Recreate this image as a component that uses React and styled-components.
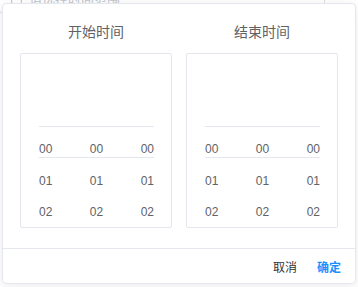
import React from "react";
import styled, { createGlobalStyle } from "styled-components";
import { LuCalendar } from "react-icons/lu";

const GlobalStyle = createGlobalStyle`
  html, body {
    margin: 0;
    padding: 0;
    background: #fff;
    font-family: "Liberation Sans", "Noto Sans CJK SC", sans-serif;
  }
`;

const Page = styled.div`
  position: relative;
  width: 358px;
  height: 287px;
  overflow: hidden;
`;

const FakeInput = styled.div`
  width: 326px;
  height: 32px;
  margin-top: -18px;
  margin-left: -1px;
  box-sizing: border-box;
  border: 1px solid #dcdfe6;
  border-radius: 4px;
  display: flex;
  align-items: center;
  gap: 6px;
  padding-left: 10px;
  color: #c0c4cc;
  font-size: 13px;
`;

const Popover = styled.div`
  position: absolute;
  left: 2px;
  top: 3px;
  width: 354px;
  height: 281px;
  box-sizing: border-box;
  background: #fff;
  border: 1px solid #e4e7ed;
  border-radius: 4px;
  box-shadow: 0 2px 12px rgba(0, 0, 0, 0.08);
  display: flex;
  flex-direction: column;
`;

const Body = styled.div`
  display: grid;
  grid-template-columns: 152px 152px;
  column-gap: 14px;
  padding: 0 17px;
`;

const Side = styled.div`
  display: flex;
  flex-direction: column;
`;

const Title = styled.div`
  height: 20px;
  margin-top: 18px;
  margin-bottom: 11px;
  text-align: center;
  font-size: 14px;
  line-height: 20px;
  color: #606266;
`;

const Panel = styled.div`
  position: relative;
  height: 175px;
  box-sizing: border-box;
  border: 1px solid #e4e7ed;
  border-radius: 2px;
  padding: 80px 17px 0 18px;
  display: flex;
  justify-content: space-between;
`;

const Line = styled.div`
  position: absolute;
  left: 18px;
  right: 17px;
  top: ${(p) => p.top}px;
  height: 1px;
  background: #e4e7ed;
`;

const Column = styled.div`
  display: flex;
  flex-direction: column;
`;

const Cell = styled.div`
  height: 31.5px;
  line-height: 31.5px;
  font-size: 12px;
  color: #606266;
`;

const Footer = styled.div`
  margin-top: auto;
  height: 35px;
  border-top: 1px solid #e4e7ed;
  display: flex;
  justify-content: flex-end;
  align-items: center;
  gap: 20px;
  padding: 0 14px 0 0;
  box-sizing: border-box;
`;

const Btn = styled.span`
  font-size: 12px;
  color: ${(p) => (p.primary ? "#1890ff" : "#333")};
  font-weight: ${(p) => (p.primary ? 600 : 400)};
`;

const rows = ["00", "01", "02"];

function TimeSide({ title }) {
  return (
    <Side>
      <Title>{title}</Title>
      <Panel>
        <Line top={72} />
        <Line top={103} />
        {[0, 1, 2].map((c) => (
          <Column key={c}>
            {rows.map((r) => (
              <Cell key={r}>{r}</Cell>
            ))}
          </Column>
        ))}
      </Panel>
    </Side>
  );
}

export default function App() {
  return (
    <Page>
      <GlobalStyle />
      <FakeInput>
        <LuCalendar size={13} />
        <span>请选择时间范围</span>
      </FakeInput>
      <Popover>
        <Body>
          <TimeSide title="开始时间" />
          <TimeSide title="结束时间" />
        </Body>
        <Footer>
          <Btn>取消</Btn>
          <Btn primary>确定</Btn>
        </Footer>
      </Popover>
    </Page>
  );
}
